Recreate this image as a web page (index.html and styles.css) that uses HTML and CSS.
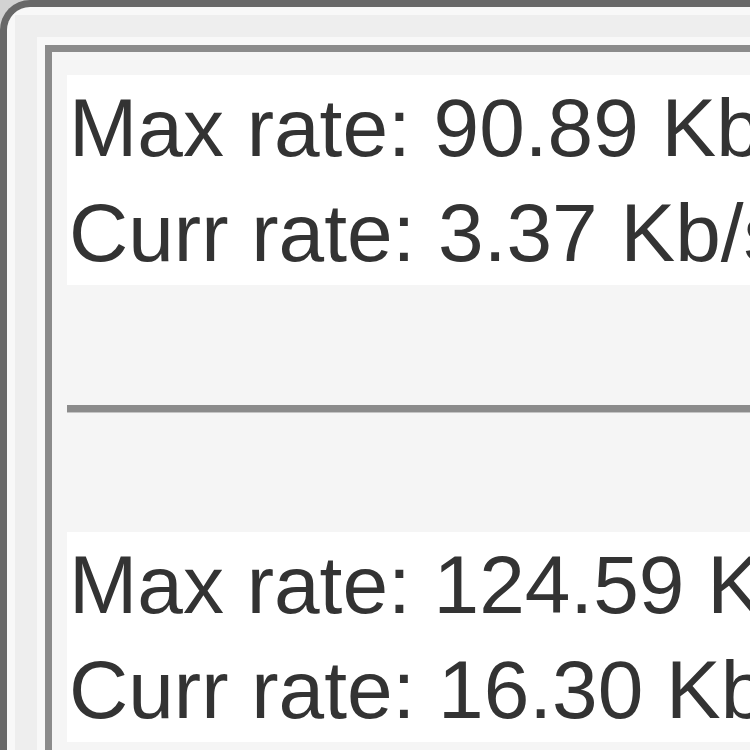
FILE: index.html
```html
<!DOCTYPE html>
<html>
<head>
<meta charset="utf-8">
<link rel="stylesheet" href="styles.css">
</head>
<body>
<div class="window">
  <div class="frame">
    <div class="band">
      <div class="inner">
        <div class="group">
          <div class="panel">
            <div class="line">Max rate: 90.89 Kb/s</div>
            <div class="line">Curr rate: 3.37 Kb/s</div>
          </div>
          <div class="sep"></div>
          <div class="panel">
            <div class="line">Max rate: 124.59 Kb/s</div>
            <div class="line">Curr rate: 16.30 Kb/s</div>
          </div>
        </div>
      </div>
    </div>
  </div>
</div>
</body>
</html>
```

FILE: styles.css
```css
html, body {
  margin: 0;
  padding: 0;
  width: 750px;
  height: 750px;
  overflow: hidden;
  background: #d2d2d2;
}

.window {
  width: 1000px;
  height: 1000px;
  border-left: 7px solid #686868;
  border-top: 7px solid #686868;
  border-top-left-radius: 30px;
  background: #f8f8f8;
  box-sizing: border-box;
  overflow: hidden;
}

.frame {
  padding: 8px 0 0 8px;
  height: 100%;
  box-sizing: border-box;
}

.band {
  background: #eeeeee;
  padding: 22px 0 0 22px;
  height: 100%;
  box-sizing: border-box;
}

.inner {
  background: #f8f8f8;
  padding: 8px 0 0 8px;
  height: 100%;
  box-sizing: border-box;
}

.group {
  background: #f5f5f5;
  border-left: 7px solid #8b8b8b;
  border-top: 7px solid #8b8b8b;
  padding: 23px 0 0 15px;
  height: 100%;
  box-sizing: border-box;
}

.panel {
  background: #ffffff;
  padding-left: 2px;
}

.line {
  font-family: "Liberation Sans", Arial, sans-serif;
  font-size: 82px;
  line-height: 105px;
  height: 105px;
  color: #333333;
  white-space: nowrap;
}

.sep {
  margin: 120px 0;
  height: 7px;
  background: #8b8b8b;
  border-bottom: 1px solid #c4c4c4;
  margin-bottom: 119px;
}
```
